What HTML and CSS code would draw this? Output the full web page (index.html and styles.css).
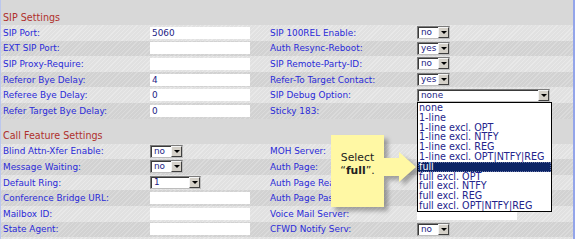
FILE: index.html
```html
<!DOCTYPE html>
<html lang="en">
<head>
    <title>Line Settings</title>
    <link rel="stylesheet" href="styles.css">
</head>
<body>
<div class="page">
    <table class="settings">
        <colgroup>
            <col class="c1"><col class="c2"><col class="c3"><col class="c4">
        </colgroup>
        <tr class="spacer"><td colspan="4"></td></tr>
        <tr class="title"><td colspan="4">SIP Settings</td></tr>
        <tr class="light">
            <td class="lbl">SIP Port:</td><td><span class="field">5060</span></td>
            <td class="lbl">SIP 100REL Enable:</td><td><span class="sel"><span class="val">no</span><i class="btn"></i></span></td>
        </tr>
        <tr class="dark">
            <td class="lbl">EXT SIP Port:</td><td><span class="field"></span></td>
            <td class="lbl">Auth Resync-Reboot:</td><td><span class="sel"><span class="val">yes</span><i class="btn"></i></span></td>
        </tr>
        <tr class="light">
            <td class="lbl">SIP Proxy-Require:</td><td><span class="field"></span></td>
            <td class="lbl">SIP Remote-Party-ID:</td><td><span class="sel"><span class="val">no</span><i class="btn"></i></span></td>
        </tr>
        <tr class="dark">
            <td class="lbl">Referor Bye Delay:</td><td><span class="field">4</span></td>
            <td class="lbl">Refer-To Target Contact:</td><td><span class="sel"><span class="val">yes</span><i class="btn"></i></span></td>
        </tr>
        <tr class="light">
            <td class="lbl">Referee Bye Delay:</td><td><span class="field">0</span></td>
            <td class="lbl">SIP Debug Option:</td><td><span class="sel wide"><span class="val">none</span><i class="btn"></i></span></td>
        </tr>
        <tr class="dark">
            <td class="lbl">Refer Target Bye Delay:</td><td><span class="field">0</span></td>
            <td class="lbl">Sticky 183:</td><td><span class="sel"><span class="val">no</span><i class="btn"></i></span></td>
        </tr>
        <tr class="spacer"><td colspan="4"></td></tr>
        <tr class="title"><td colspan="4">Call Feature Settings</td></tr>
        <tr class="light">
            <td class="lbl">Blind Attn-Xfer Enable:</td><td><span class="sel"><span class="val">no</span><i class="btn"></i></span></td>
            <td class="lbl">MOH Server:</td><td><span class="field"></span></td>
        </tr>
        <tr class="dark">
            <td class="lbl">Message Waiting:</td><td><span class="sel"><span class="val">no</span><i class="btn"></i></span></td>
            <td class="lbl">Auth Page:</td><td><span class="sel"><span class="val">no</span><i class="btn"></i></span></td>
        </tr>
        <tr class="light">
            <td class="lbl">Default Ring:</td><td><span class="sel ring"><span class="val">1</span><i class="btn"></i></span></td>
            <td class="lbl">Auth Page Realm:</td><td><span class="field"></span></td>
        </tr>
        <tr class="dark">
            <td class="lbl">Conference Bridge URL:</td><td><span class="field"></span></td>
            <td class="lbl">Auth Page Password:</td><td><span class="field"></span></td>
        </tr>
        <tr class="light">
            <td class="lbl">Mailbox ID:</td><td><span class="field"></span></td>
            <td class="lbl">Voice Mail Server:</td><td><span class="field"></span></td>
        </tr>
        <tr class="dark">
            <td class="lbl">State Agent:</td><td><span class="field"></span></td>
            <td class="lbl">CFWD Notify Serv:</td><td><span class="sel"><span class="val">no</span><i class="btn"></i></span></td>
        </tr>
        <tr class="light">
            <td class="lbl"></td><td><span class="field"></span></td>
            <td class="lbl"></td><td></td>
        </tr>
    </table>

    <!-- open list of the SIP Debug Option select -->
    <ul class="droplist">
        <li>none</li>
        <li>1-line</li>
        <li>1-line excl. OPT</li>
        <li>1-line excl. NTFY</li>
        <li>1-line excl. REG</li>
        <li>1-line excl. OPT|NTFY|REG</li>
        <li class="picked">full</li>
        <li>full excl. OPT</li>
        <li>full excl. NTFY</li>
        <li>full excl. REG</li>
        <li>full excl. OPT|NTFY|REG</li>
    </ul>

    <div class="callout">
        <svg class="callout-shape" width="90" height="80" viewBox="0 0 90 80">
            <polygon points="0,0 53,0 53,23 68,23 68,17 85,32 68,47 68,41 53,41 53,72 0,72" fill="#fff8a4"/>
        </svg>
        <div class="callout-text">Select<br>&ldquo;<b>full</b>&rdquo;.</div>
    </div>
</div>
</body>
</html>
```

FILE: styles.css
```css
* {
    margin: 0;
    padding: 0;
}

body {
    font-family: "DejaVu Sans", Verdana, sans-serif;
    font-size: 8.9px;
    background: #d6d6d6;
}

.page {
    position: relative;
    width: 572px;
    height: 239px;
    overflow: hidden;
    border-left: 1px solid #bcc7ee;
    border-right: 2px solid #93a5ea;
    background: #d8d8d8;
}

.settings {
    width: 100%;
    border-collapse: collapse;
    table-layout: fixed;
}

.c1 { width: 149px; }
.c2 { width: 118px; }
.c3 { width: 149px; }

.settings td {
    height: 15.6px;
    padding: 0;
    vertical-align: middle;
    white-space: nowrap;
}

.light {
    background: #e1e1e1 repeating-linear-gradient(135deg, rgba(255,255,255,0.25) 0 1px, transparent 1px 3px);
}

.dark {
    background: #d2d2d2 repeating-linear-gradient(135deg, rgba(255,255,255,0.2) 0 1px, transparent 1px 3px);
}

.spacer td {
    height: 8px !important;
}

.title td {
    height: 16px !important;
    padding-left: 2px;
    color: #b0302c;
    font-size: 9.6px;
    padding-top: 1px;
}

.lbl {
    padding-left: 2px !important;
    color: #2a2ad8;
}

.field {
    display: block;
    width: 100px;
    height: 12px;
    line-height: 12px;
    padding-left: 2px;
    box-sizing: border-box;
    background: #fff;
    color: #1c1c84;
}

.sel {
    display: flex;
    width: 33px;
    height: 13px;
    box-sizing: border-box;
    background: #fff;
    border: 1px solid #7c7c7c;
    border-right-color: #bdbdbd;
    border-bottom-color: #bdbdbd;
    box-shadow: inset 1px 1px #3a3a3a;
    color: #1c1c84;
}

.sel.wide {
    width: 133px;
}

.sel.ring {
    width: 51px;
}

.val {
    flex: 1;
    padding-left: 3px;
    line-height: 11px;
}

.btn {
    display: flex;
    align-items: center;
    justify-content: center;
    width: 11px;
    height: 11px;
    box-sizing: border-box;
    background: #d4d0c8;
    border: 1px solid;
    border-color: #f4f4f4 #404040 #404040 #f4f4f4;
}

.btn::after {
    content: '';
    border-left: 3px solid transparent;
    border-right: 3px solid transparent;
    border-top: 3px solid #000;
}

.droplist {
    position: absolute;
    left: 416px;
    top: 102px;
    width: 135px;
    box-sizing: border-box;
    list-style: none;
    background: #fff;
    border: 1px solid #000;
    color: #24248c;
    font-size: 9.6px;
    z-index: 2;
}

.droplist li {
    height: 9.8px;
    line-height: 9.8px;
    padding-left: 1px;
    white-space: nowrap;
    overflow: hidden;
}

.droplist .picked {
    background: #0b2466;
    color: #fff;
    outline: 1px dotted #6c78a8;
    outline-offset: -1px;
}

.callout {
    position: absolute;
    left: 330px;
    top: 135px;
    width: 90px;
    height: 80px;
    z-index: 3;
}

.callout-shape {
    display: block;
    filter: drop-shadow(4px 4px 2px rgba(0, 0, 0, 0.3));
}

.callout-text {
    position: absolute;
    left: 0;
    top: 16px;
    width: 53px;
    text-align: center;
    font-size: 10.8px;
    line-height: 13px;
    color: #222;
}
```
